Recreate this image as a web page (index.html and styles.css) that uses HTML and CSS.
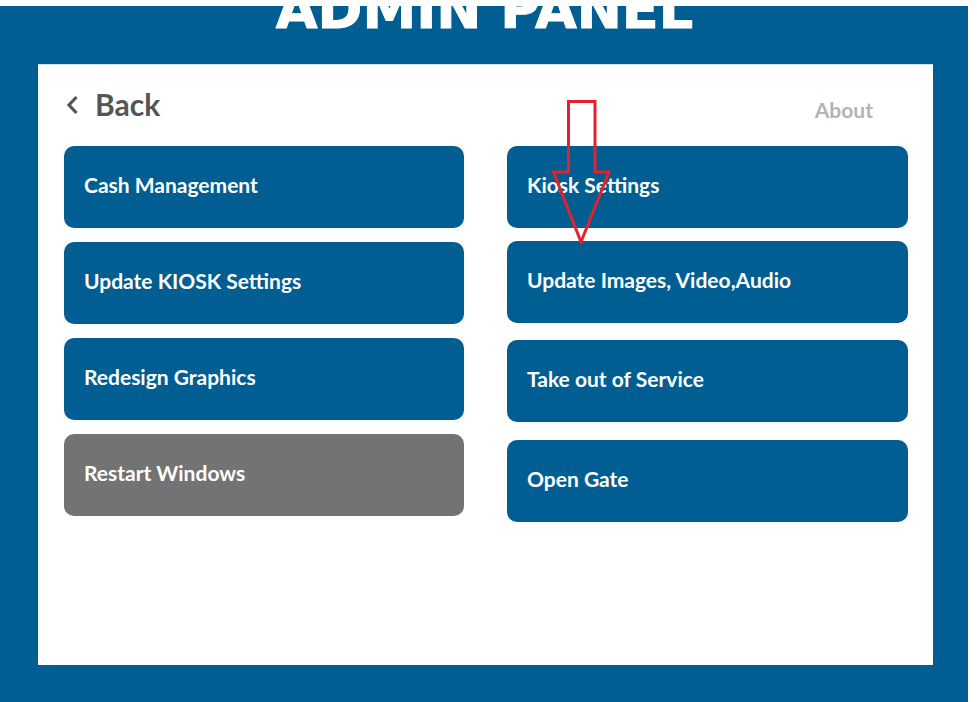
FILE: index.html
```html
<!DOCTYPE html>
<html lang="en">
  <head>
    <meta charset="UTF-8" />
    <meta name="viewport" content="width=device-width, initial-scale=1.0" />
    <title>Admin Panel</title>
    <link rel="stylesheet" href="styles.css">
  </head>
  <body>
    <div class="adminFrame">
      <div class="adminHeader">
        <h1 class="adminTitle">ADMIN PANEL</h1>
      </div>
      <div class="adminPanel">
        <div class="panelTop">
          <a class="backBtn" href="#">
            <svg class="backIcon" width="13" height="20" viewBox="0 0 13 20">
              <path d="M10.5 2 L3 10 L10.5 18" fill="none" stroke="#555" stroke-width="3.2" />
            </svg>
            <span>Back</span>
          </a>
          <a class="aboutLink" href="#">About</a>
        </div>
        <div class="btnGrid">
          <div class="btnCol leftCol">
            <div class="panelBtn">Cash Management</div>
            <div class="panelBtn">Update KIOSK Settings</div>
            <div class="panelBtn">Redesign Graphics</div>
            <div class="panelBtn grey">Restart Windows</div>
          </div>
          <div class="btnCol rightCol">
            <div class="panelBtn">Kiosk Settings</div>
            <div class="panelBtn">Update Images, Video,Audio</div>
            <div class="panelBtn">Take out of Service</div>
            <div class="panelBtn">Open Gate</div>
          </div>
        </div>
      </div>
    </div>

    <!-- red arrow drawn on top of the screenshot -->
    <svg class="redArrow" width="977" height="702" viewBox="0 0 977 702">
      <path d="M568.5 101.5 L595 101.5 L595 172 L609 172 L581 242 L553.5 172 L568.5 172 Z"
        fill="none" stroke="#e8202a" stroke-width="3" stroke-linejoin="miter" />
    </svg>
  </body>
</html>
```

FILE: styles.css
```css
* {
  margin: 0;
  padding: 0;
  box-sizing: border-box;
}
body {
  background: #fff;
  font-family: Lato, "Liberation Sans", sans-serif;
  width: 977px;
  height: 702px;
  overflow: hidden;
}
.adminFrame {
  width: 968px;
  height: 696px;
  margin-top: 6px;
  background: #005e92;
  padding: 0 35px 0 38px;
  display: flow-root;
}
.adminHeader {
  height: 58px;
  text-align: center;
  display: flow-root;
}
.adminTitle {
  font-family: "DejaVu Sans", sans-serif;
  font-weight: bold;
  font-size: 54px;
  line-height: 1;
  color: #fff;
  -webkit-text-stroke: 1px #fff;
  margin-top: -23px;
  padding-right: 2px;
}
.adminPanel {
  width: 895px;
  height: 601px;
  background: #fff;
  border-top: 1px solid #cfe0ea;
  padding: 0 25px 0 26px;
}
.panelTop {
  height: 81px;
  display: flex;
  justify-content: space-between;
  align-items: flex-start;
}
.backBtn {
  display: flex;
  align-items: center;
  gap: 16px;
  margin: 21px 0 0 2px;
  text-decoration: none;
  color: #555;
  font-weight: bold;
  font-size: 30px;
}
.backIcon {
  display: block;
  margin-top: 1px;
}
.aboutLink {
  margin: 32px 35px 0 0;
  text-decoration: none;
  color: #b3b3b3;
  font-weight: bold;
  font-size: 21px;
}
.btnGrid {
  display: flex;
  gap: 43px;
}
.btnCol {
  display: flex;
  flex-direction: column;
}
.leftCol {
  width: 400px;
  gap: 14px;
}
.rightCol {
  width: 401px;
  gap: 13px;
}
.rightCol .panelBtn:nth-child(3) {
  margin-top: 4px;
}
.rightCol .panelBtn:nth-child(4) {
  margin-top: 5px;
}
.panelBtn {
  height: 82px;
  border-radius: 10px;
  background: #005e92;
  color: #fff;
  font-weight: bold;
  font-size: 21px;
  display: flex;
  align-items: center;
  padding: 0 0 5px 20px;
}
.panelBtn.grey {
  background: #737373;
}
.redArrow {
  position: absolute;
  left: 0;
  top: 0;
  pointer-events: none;
}
```
